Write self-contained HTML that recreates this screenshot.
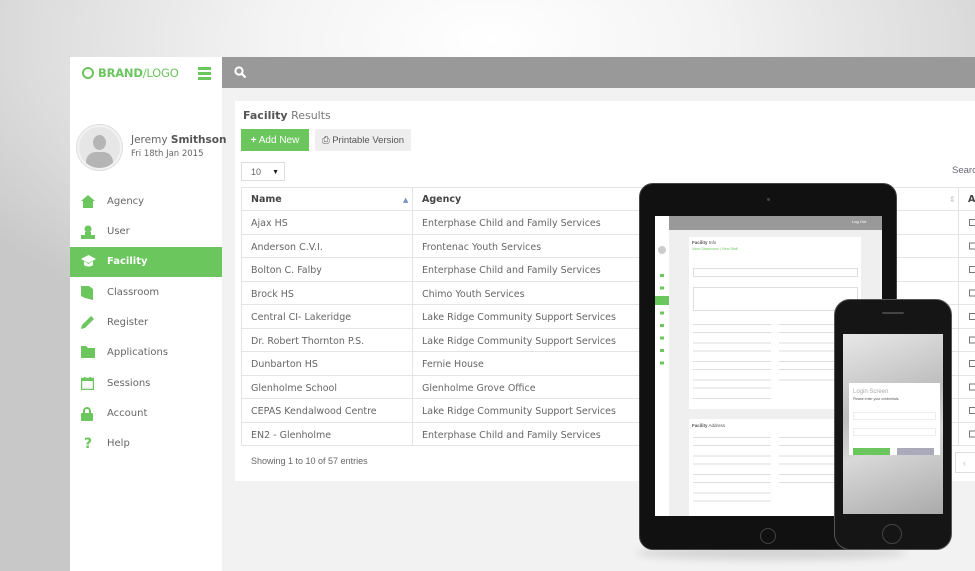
<!DOCTYPE html>
<html><head><meta charset="utf-8"><style>
*{margin:0;padding:0;box-sizing:border-box}
body{width:975px;height:571px;overflow:hidden;position:relative;font-family:"Liberation Sans",sans-serif;background:radial-gradient(ellipse 620px 330px at 490px 40px,#fff 0%,#f4f4f4 35%,#dcdcdc 75%,#c8c8c8 100%)}
.a{position:absolute}
.side{left:70px;top:57px;width:152px;height:514px;background:#fff}
.top{left:222px;top:57px;width:753px;height:31px;background:#999}
.cont{left:222px;top:88px;width:753px;height:483px;background:#f2f2f2}
.card{left:235px;top:101px;width:740px;height:380px;background:#fff}
.t{color:#666;font-size:10px;font-family:"DejaVu Sans",sans-serif}
.mi{position:absolute;left:0;width:152px;height:30px;font-size:10px;color:#666;font-family:"DejaVu Sans",sans-serif;line-height:30px;padding-left:37px}
.mi svg{position:absolute;left:11px;top:8px}
.row{position:absolute;left:241px;width:734px;height:23.5px;border-bottom:1px solid #e4e4e4;font-size:9.5px;color:#666;font-family:"DejaVu Sans",sans-serif;line-height:26px}
.row span{position:absolute}
.row .c1{left:10px}.row .c2{left:181px}
</style></head><body>
<div class="a side"></div>
<div class="a top"></div>
<div class="a cont"></div>
<div class="a card"></div>
<!-- logo -->
<div class="a" style="left:82px;top:67px;width:12px;height:12px;border:2.5px solid #6cc65e;border-radius:50%"></div>
<div class="a" style="left:98px;top:66px;font-size:11.5px;color:#6cc65e;font-family:'DejaVu Sans',sans-serif;letter-spacing:-0.2px"><b>BRAND</b>/LOGO</div>
<div class="a" style="left:198px;top:67px;width:13px;height:2.5px;background:#6cc65e;box-shadow:0 5px 0 #6cc65e,0 10px 0 #6cc65e"></div>
<svg class="a" style="left:234px;top:66px" width="13" height="13" viewBox="0 0 13 13"><circle cx="5" cy="5" r="3.6" fill="none" stroke="#fff" stroke-width="2"/><path d="M8 8l3.5 3.5" stroke="#fff" stroke-width="2.2"/></svg>
<!-- user -->
<div class="a" style="left:77px;top:125px;width:45px;height:45px;border-radius:50%;background:#e6e6e6;border:2px solid #f3f3f3;box-shadow:0 0 0 1px #ddd;overflow:hidden"><div style="position:absolute;left:14px;top:8px;width:13px;height:15px;border-radius:50%;background:#b5b5b5"></div><div style="position:absolute;left:7px;top:25px;width:27px;height:20px;border-radius:10px 10px 0 0;background:#b5b5b5"></div></div>
<div class="a t" style="left:131px;top:134px;font-size:10.5px">Jeremy <b style="color:#555">Smithson</b></div>
<div class="a t" style="left:131px;top:149px;font-size:8.5px">Fri 18th Jan 2015</div>
<!-- menu -->
<div class="a" style="left:70px;top:187px;width:152px;height:280px">
<div class="mi" style="top:0"><svg width="14" height="13" viewBox="0 0 14 13"><path d="M7 0L0 6h2v7h10V6h2z" fill="#6cc65e"/></svg>Agency</div>
<div class="mi" style="top:30px"><svg width="14" height="14" viewBox="0 0 14 14"><circle cx="7" cy="4" r="3.5" fill="#6cc65e"/><path d="M4 7h6v3h4v4H0v-4h4z" fill="#6cc65e"/></svg>User</div>
<div class="mi" style="top:60px;background:#6cc65e;color:#fff;font-weight:bold"><svg width="15" height="12" viewBox="0 0 15 12"><path d="M7.5 0L15 4 7.5 8 0 4z" fill="#fff"/><path d="M3 6v4c2 2 7 2 9 0V6L7.5 9z" fill="#fff"/></svg>Facility</div>
<div class="mi" style="top:91px"><svg width="12" height="14" viewBox="0 0 12 14"><path d="M0 0h8l4 3v11L4 12 0 10z" fill="#6cc65e"/></svg>Classroom</div>
<div class="mi" style="top:121px"><svg width="13" height="13" viewBox="0 0 13 13"><path d="M10 0l3 3-9 9-4 1 1-4z" fill="#6cc65e"/></svg>Register</div>
<div class="mi" style="top:151px"><svg width="14" height="12" viewBox="0 0 14 12"><path d="M0 0h5l2 2h7v10H0z" fill="#6cc65e"/></svg>Applications</div>
<div class="mi" style="top:182px"><svg width="13" height="13" viewBox="0 0 13 13"><rect x="0.5" y="1.5" width="12" height="11" fill="none" stroke="#6cc65e" stroke-width="1.5"/><rect x="0" y="1" width="13" height="3" fill="#6cc65e"/><rect x="3" y="0" width="1.5" height="3" fill="#6cc65e"/><rect x="8.5" y="0" width="1.5" height="3" fill="#6cc65e"/></svg>Sessions</div>
<div class="mi" style="top:212px"><svg width="12" height="14" viewBox="0 0 12 14"><path d="M3 6V4a3 3 0 016 0v2" fill="none" stroke="#6cc65e" stroke-width="2"/><rect x="0" y="6" width="12" height="8" rx="1" fill="#6cc65e"/></svg>Account</div>
<div class="mi" style="top:242px"><span style="position:absolute;left:14px;top:0;color:#6cc65e;font-weight:bold;font-size:14px">?</span>Help</div>
</div>
<!-- content -->
<div class="a t" style="left:243px;top:109px;font-size:11px;color:#555"><b>Facility</b> <span style="color:#777">Results</span></div>
<div class="a" style="left:241px;top:129px;width:68px;height:22px;background:#6cc65e;color:#fff;font-size:10px;line-height:23px;text-align:center"><b>+</b> Add New</div>
<div class="a" style="left:315px;top:129px;width:96px;height:22px;background:#eee;color:#555;font-size:9.5px;line-height:23px;text-align:center">&#9113; Printable Version</div>
<div class="a" style="left:241px;top:162px;width:44px;height:19px;border:1px solid #ddd;font-size:9px;color:#666;line-height:19px;padding-left:9px">10<span style="position:absolute;right:5px;font-size:7px;color:#222">▼</span></div>
<div class="a" style="left:952px;top:165px;font-size:9.5px;color:#667">Search</div>
<div class="a" style="left:241px;top:187px;width:734px;height:259px;border:1px solid #e4e4e4;border-right:none"></div>
<div class="row" style="top:187px;height:24px;font-weight:bold;color:#444"><span class="c1">Name</span><span style="left:162px;font-size:7px;color:#7892c2">▲</span><span class="c2">Agency</span><span style="left:708px;font-size:8px;color:#ccc">⇕</span><span style="left:727px">Ac</span></div>
<div class="row" style="top:211px"><span class="c1">Ajax HS</span><span class="c2">Enterphase Child and Family Services</span></div>
<div class="row" style="top:234.5px"><span class="c1">Anderson C.V.I.</span><span class="c2">Frontenac Youth Services</span></div>
<div class="row" style="top:258px"><span class="c1">Bolton C. Falby</span><span class="c2">Enterphase Child and Family Services</span></div>
<div class="row" style="top:281.5px"><span class="c1">Brock HS</span><span class="c2">Chimo Youth Services</span></div>
<div class="row" style="top:305px"><span class="c1">Central CI- Lakeridge</span><span class="c2">Lake Ridge Community Support Services</span></div>
<div class="row" style="top:328.5px"><span class="c1">Dr. Robert Thornton P.S.</span><span class="c2">Lake Ridge Community Support Services</span></div>
<div class="row" style="top:352px"><span class="c1">Dunbarton HS</span><span class="c2">Fernie House</span></div>
<div class="row" style="top:375.5px"><span class="c1">Glenholme School</span><span class="c2">Glenholme Grove Office</span></div>
<div class="row" style="top:399px"><span class="c1">CEPAS Kendalwood Centre</span><span class="c2">Lake Ridge Community Support Services</span></div>
<div class="row" style="top:422.5px"><span class="c1">EN2 - Glenholme</span><span class="c2">Enterphase Child and Family Services</span></div>
<div class="a" style="left:412px;top:187px;width:1px;height:259px;background:#e4e4e4"></div>
<div class="a" style="left:958px;top:187px;width:1px;height:259px;background:#e4e4e4"></div>
<div class="a" style="left:969px;top:219px;width:7px;height:220px;background:repeating-linear-gradient(#0000 0,#0000 0px,#777 0px,#777 1.2px,#0000 1.2px,#0000 6px,#777 6px,#777 7.2px,#0000 7.2px,#0000 23.5px)"></div>
<div class="a" style="left:969px;top:219px;width:1.2px;height:220px;background:repeating-linear-gradient(#777 0,#777 7px,#0000 7px,#0000 23.5px)"></div>
<div class="a" style="left:251px;top:456px;font-size:9px;color:#666">Showing 1 to 10 of 57 entries</div>
<div class="a" style="left:955px;top:452px;width:25px;height:21px;border:1px solid #ddd;background:#fff;color:#bbb;font-size:9px;line-height:20px;padding-left:7px">‹</div>
<!-- tablet -->
<div class="a" style="left:636px;top:546px;width:270px;height:14px;border-radius:50%;background:rgba(0,0,0,.12);filter:blur(4px)"></div>
<div class="a" style="left:639px;top:183px;width:258px;height:367px;background:#111;border-radius:14px;border:1px solid #444"></div>
<div class="a" style="left:767px;top:198px;width:3px;height:3px;border-radius:50%;background:#444"></div>
<div class="a" style="left:760px;top:528px;width:16px;height:16px;border-radius:50%;border:1px solid #444"></div>
<div class="a" style="left:655px;top:216px;width:227px;height:300px;background:#efefef;overflow:hidden">
 <div class="a" style="left:0;top:0;width:14px;height:300px;background:#fff"></div>
 <div class="a" style="left:14px;top:0;width:213px;height:14px;background:#999"></div>
 <div class="a" style="left:0;top:80px;width:14px;height:9px;background:#6cc65e"></div>
 <div class="a" style="left:3px;top:30px;width:8px;height:8px;border-radius:50%;background:#ccc"></div>
 <div class="a" style="left:5px;top:58px;width:4px;height:100px;background:repeating-linear-gradient(#6cc65e 0,#6cc65e 3px,#0000 3px,#0000 12.5px)"></div>
 <div class="a" style="left:197px;top:3px;font-size:4px;color:#fff">Log Out</div>
 <div class="a" style="left:34px;top:21px;width:172px;height:172px;background:#fff"></div>
 <div class="a" style="left:34px;top:203px;width:172px;height:100px;background:#fff"></div>
 <div class="a" style="left:37px;top:24px;font-size:4.5px;color:#555"><b>Facility</b> Info</div>
 <div class="a" style="left:37px;top:31px;font-size:3.5px;color:#6cc65e">View Classrooms | View Staff</div>
 <div class="a" style="left:38px;top:52px;width:165px;height:9px;border:1px solid #ddd"></div>
 <div class="a" style="left:38px;top:71px;width:165px;height:24px;border:1px solid #ddd"></div>
 <div class="a" style="left:38px;top:108px;width:78px;height:80px;background:repeating-linear-gradient(#ddd 0,#ddd 1px,#fff 1px,#fff 8px,#ddd 8px,#ddd 9px,#fff 9px,#fff 18.5px)"></div>
 <div class="a" style="left:124px;top:108px;width:82px;height:62px;background:repeating-linear-gradient(#ddd 0,#ddd 1px,#fff 1px,#fff 8px,#ddd 8px,#ddd 9px,#fff 9px,#fff 18.5px)"></div>
 <div class="a" style="left:37px;top:207px;font-size:4.5px;color:#555"><b>Facility</b> Address</div>
 <div class="a" style="left:38px;top:221px;width:78px;height:72px;background:repeating-linear-gradient(#ddd 0,#ddd 1px,#fff 1px,#fff 8px,#ddd 8px,#ddd 9px,#fff 9px,#fff 18.5px)"></div>
 <div class="a" style="left:124px;top:221px;width:82px;height:55px;background:repeating-linear-gradient(#ddd 0,#ddd 1px,#fff 1px,#fff 8px,#ddd 8px,#ddd 9px,#fff 9px,#fff 18.5px)"></div>
</div>
<!-- phone -->
<div class="a" style="left:834px;top:299px;width:118px;height:251px;background:#151515;border-radius:16px;border:1px solid #555"></div>
<div class="a" style="left:882px;top:312px;width:22px;height:2px;background:#444;border-radius:1px"></div>
<div class="a" style="left:882px;top:524px;width:20px;height:20px;border-radius:50%;border:1px solid #444"></div>
<div class="a" style="left:843px;top:334px;width:100px;height:180px;background:linear-gradient(160deg,#e8e8e8 0%,#bdbdbd 40%,#d8d8d8 60%,#aaa 100%)"></div>
<div class="a" style="left:849px;top:383px;width:91px;height:72px;background:#fff"></div>
<div class="a" style="left:853px;top:389px;font-size:6px;color:#aaa">Login Screen</div>
<div class="a" style="left:853px;top:397px;font-size:3.5px;color:#555">Please enter your credentials.</div>
<div class="a" style="left:853px;top:412px;width:83px;height:8px;border:1px solid #eee"></div>
<div class="a" style="left:853px;top:428px;width:83px;height:8px;border:1px solid #eee"></div>
<div class="a" style="left:853px;top:448px;width:37px;height:7px;background:#6cc65e"></div>
<div class="a" style="left:897px;top:448px;width:37px;height:7px;background:#aab"></div>
</body></html>
